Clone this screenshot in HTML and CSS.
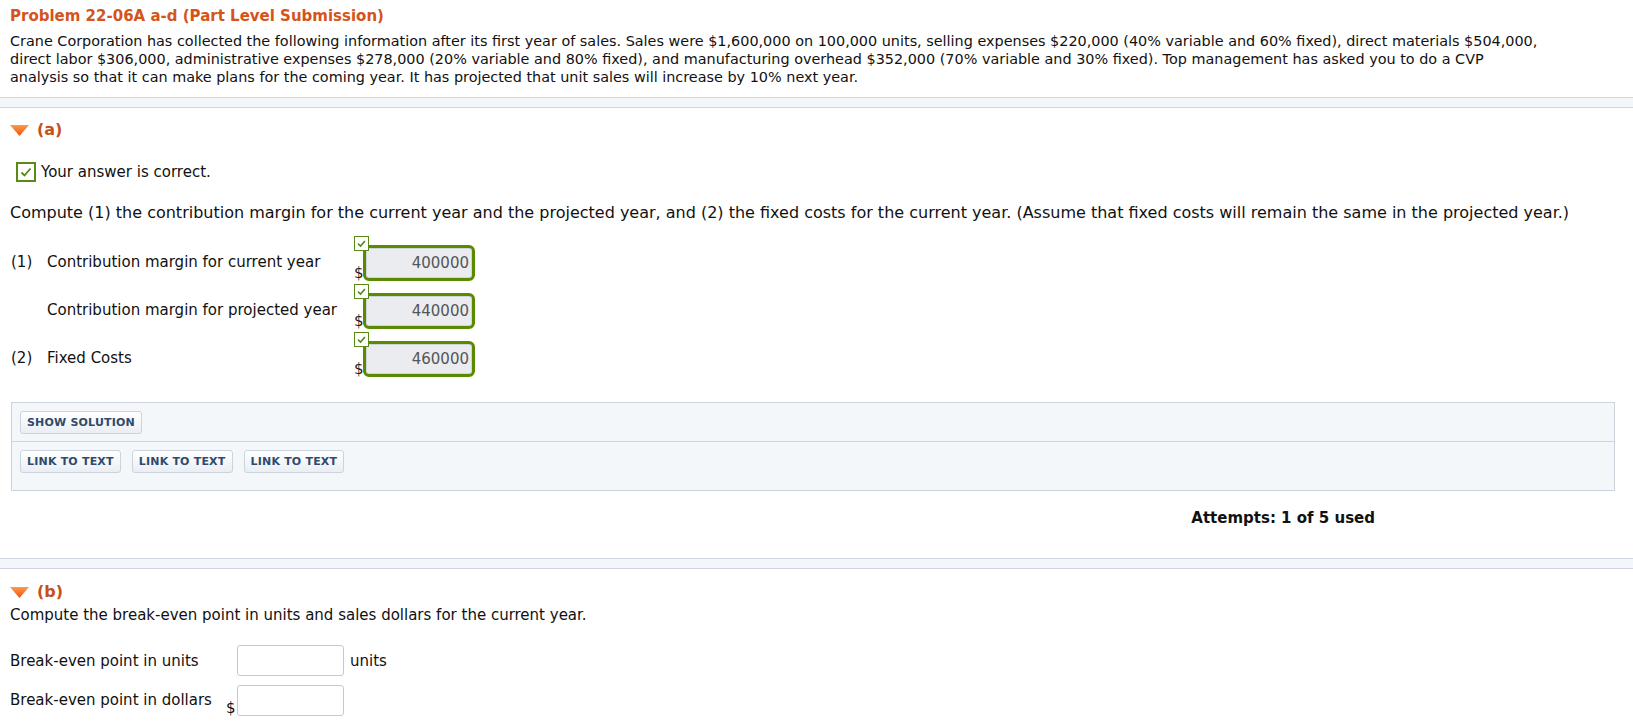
FILE: index.html
```html
<!DOCTYPE html>
<html lang="en">
<head>
  <meta charset="UTF-8">
  <title>Problem 22-06A a-d</title>
  <link rel="stylesheet" href="styles.css">
</head>
<body>
  <div class="problem">
    <h1 class="title">Problem 22-06A a-d (Part Level Submission)</h1>
    <p class="intro">Crane Corporation has collected the following information after its first year of sales. Sales were $1,600,000 on 100,000 units, selling expenses $220,000 (40% variable and 60% fixed), direct materials $504,000, direct labor $306,000, administrative expenses $278,000 (20% variable and 80% fixed), and manufacturing overhead $352,000 (70% variable and 30% fixed). Top management has asked you to do a CVP analysis so that it can make plans for the coming year. It has projected that unit sales will increase by 10% next year.</p>
  </div>

  <div class="divider"></div>

  <div class="part">
    <h2 class="part-head">
      <svg class="arrow" width="19" height="11" viewBox="0 0 19 11">
        <defs>
          <linearGradient id="og" x1="0" y1="0" x2="0" y2="1">
            <stop offset="0" stop-color="#ff9a4a"/>
            <stop offset="1" stop-color="#f0520a"/>
          </linearGradient>
        </defs>
        <polygon points="0,0 19,0 9.5,11" fill="url(#og)"/>
      </svg>
      (a)
    </h2>

    <div class="correct">
      <span class="bigcheck">
        <svg width="16" height="16" viewBox="0 0 16 16"><path d="M3.5 8.5 L6.5 11.5 L12.5 4.5" fill="none" stroke="#4e8a12" stroke-width="1.8"/></svg>
      </span>
      Your answer is correct.
    </div>

    <p class="question">Compute (1) the contribution margin for the current year and the projected year, and (2) the fixed costs for the current year. (Assume that fixed costs will remain the same in the projected year.)</p>

    <div class="answers">
      <div class="row">
        <span class="num">(1)</span>
        <span class="label">Contribution margin for current year</span>
        <div class="answer">
          <span class="tick"><svg width="13" height="13" viewBox="0 0 13 13"><path d="M3 6.5 L5.5 9 L10 4" fill="none" stroke="#4e8a12" stroke-width="1.6"/></svg></span>
          <span class="dollar">$</span>
          <span class="field done">400000</span>
        </div>
      </div>
      <div class="row">
        <span class="num"></span>
        <span class="label">Contribution margin for projected year</span>
        <div class="answer">
          <span class="tick"><svg width="13" height="13" viewBox="0 0 13 13"><path d="M3 6.5 L5.5 9 L10 4" fill="none" stroke="#4e8a12" stroke-width="1.6"/></svg></span>
          <span class="dollar">$</span>
          <span class="field done">440000</span>
        </div>
      </div>
      <div class="row">
        <span class="num">(2)</span>
        <span class="label">Fixed Costs</span>
        <div class="answer">
          <span class="tick"><svg width="13" height="13" viewBox="0 0 13 13"><path d="M3 6.5 L5.5 9 L10 4" fill="none" stroke="#4e8a12" stroke-width="1.6"/></svg></span>
          <span class="dollar">$</span>
          <span class="field done">460000</span>
        </div>
      </div>
    </div>

    <div class="solution">
      <div class="sol-top">
        <button class="btn">Show Solution</button>
      </div>
      <div class="sol-links">
        <button class="btn">Link to Text</button>
        <button class="btn">Link to Text</button>
        <button class="btn">Link to Text</button>
      </div>
    </div>

    <div class="attempts">Attempts: 1 of 5 used</div>
  </div>

  <div class="divider second"></div>

  <div class="part">
    <h2 class="part-head b">
      <svg class="arrow" width="19" height="11" viewBox="0 0 19 11">
        <defs>
          <linearGradient id="og2" x1="0" y1="0" x2="0" y2="1">
            <stop offset="0" stop-color="#ff9a4a"/>
            <stop offset="1" stop-color="#f0520a"/>
          </linearGradient>
        </defs>
        <polygon points="0,0 19,0 9.5,11" fill="url(#og2)"/>
      </svg>
      (b)
    </h2>
    <p class="question b">Compute the break-even point in units and sales dollars for the current year.</p>

    <div class="brow first">
      <span class="blabel">Break-even point in units</span>
      <span class="bdollar"></span>
      <span class="field empty"></span>
      <span class="unit">units</span>
    </div>
    <div class="brow">
      <span class="blabel">Break-even point in dollars</span>
      <span class="bdollar">$</span>
      <span class="field empty"></span>
    </div>
  </div>
</body>
</html>
```

FILE: styles.css
```css
body{
  margin: 0;
  font-family: "DejaVu Sans", Verdana, sans-serif;
  font-size: 15px;
  color: #111;
  background: #fff;
}

.problem{
  padding: 6px 10px 0 10px;
}

.title{
  margin: 0;
  font-size: 15px;
  line-height: 20px;
  color: #d4541a;
}

.intro{
  margin: 6px 0 0 0;
  max-width: 1530px;
  font-size: 14.4px;
  line-height: 18px;
}

.divider{
  margin-top: 11px;
  height: 9px;
  background: #f4f7fa;
  border-top: 1px solid #cfd6df;
  border-bottom: 1px solid #cfd6df;
}

.divider.second{
  margin-top: 30px;
}

.part{
  padding: 0 10px;
}

.part-head{
  margin: 12px 0 0 0;
  font-size: 16px;
  line-height: 20px;
  color: #c4501a;
  display: flex;
  align-items: center;
  gap: 8px;
}

.part-head.b{
  margin-top: 13px;
}

.arrow{
  display: block;
}

.correct{
  margin: 22px 0 0 6px;
  display: flex;
  align-items: center;
  gap: 5px;
  line-height: 20px;
}

.bigcheck{
  width: 16px;
  height: 16px;
  border: 2px solid #5a8a14;
  display: flex;
}

.question{
  margin: 22px 0 0 0;
  font-size: 16px;
  line-height: 18px;
}

.question.b{
  margin-top: 4px;
  font-size: 15px;
}

.answers{
  margin-top: 14px;
}

.row{
  display: flex;
  align-items: flex-end;
  height: 48px;
}

.num{
  width: 36px;
  padding-left: 1px;
  margin-bottom: 13px;
  line-height: 18px;
}

.label{
  width: 307px;
  margin-bottom: 13px;
  line-height: 18px;
}

.answer{
  position: relative;
  display: flex;
  align-items: flex-end;
  padding-top: 9px;
  margin-bottom: 3px;
}

.tick{
  position: absolute;
  top: 0;
  left: 0;
  width: 13px;
  height: 13px;
  border: 1px solid #5a8a14;
  background: #fff;
  z-index: 1;
  display: flex;
}

.dollar{
  width: 9px;
  font-size: 15px;
  line-height: 16px;
  color: #222;
}

.field{
  display: block;
  box-sizing: border-box;
  text-align: right;
}

.field.done{
  width: 112px;
  height: 36px;
  border: 3px solid #5a8a00;
  border-radius: 6px;
  background: #ebecef;
  color: #555;
  font-size: 15px;
  line-height: 30px;
  padding-right: 3px;
  box-shadow: inset 0 0 0 1px #d0d3d8;
}

.solution{
  margin: 22px 8px 0 1px;
  background: #f4f7fa;
  border: 1px solid #cdd4de;
}

.sol-top{
  padding: 8px 8px 7px 8px;
  border-bottom: 1px solid #cdd4de;
}

.sol-links{
  padding: 8px 8px 17px 8px;
  display: flex;
  gap: 11px;
}

.btn{
  font-family: "DejaVu Sans", Verdana, sans-serif;
  font-size: 11px;
  font-weight: bold;
  letter-spacing: 0.2px;
  text-transform: uppercase;
  color: #2f4a6d;
  height: 23px;
  padding: 0 6px;
  border: 1px solid #cbd3de;
  border-radius: 3px;
  background: linear-gradient(#ffffff, #eaeef3);
  display: block;
}

.attempts{
  margin-top: 17px;
  text-align: right;
  padding-right: 248px;
  font-weight: bold;
  font-size: 15px;
  line-height: 20px;
  color: #111;
}

.brow{
  display: flex;
  align-items: flex-end;
  margin-top: 9px;
}

.brow.first{
  margin-top: 21px;
  align-items: center;
}

.blabel{
  width: 216px;
  line-height: 18px;
  margin-bottom: 7px;
}

.brow.first .blabel{
  margin-bottom: 0;
}

.bdollar{
  width: 11px;
  line-height: 16px;
  font-size: 15px;
}

.field.empty{
  width: 107px;
  height: 31px;
  border: 1px solid #c8c8c8;
  border-radius: 3px;
  background: #fff;
}

.unit{
  margin-left: 6px;
  line-height: 18px;
}
```
